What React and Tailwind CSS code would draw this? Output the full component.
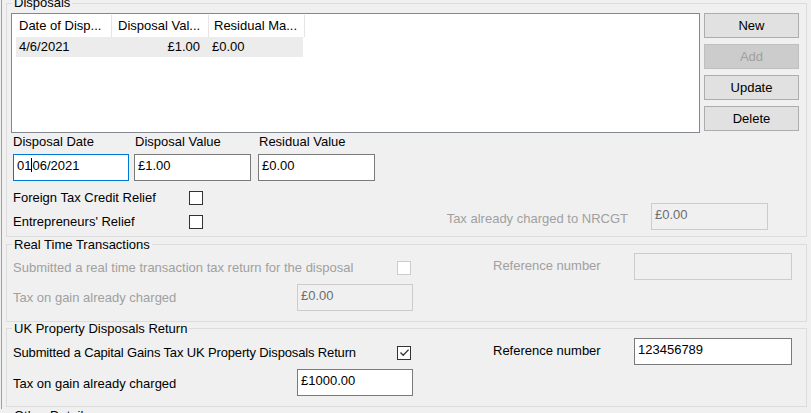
import { useState } from "react";

const Check = ({ checked, disabled }) => (
  <div
    className={`w-[14px] h-[14px] shrink-0 bg-white border flex items-center justify-center ${
      disabled ? "border-[#cccccc]" : "border-[#333333]"
    }`}
  >
    {checked && (
      <svg width="11" height="11" viewBox="0 0 11 11">
        <path d="M1.5 5.5 L4.2 8.3 L9.6 2.6" fill="none" stroke="#333" strokeWidth="1.3" />
      </svg>
    )}
  </div>
);

const Box = ({ children, className = "", disabled, focus }) => (
  <div
    className={`h-[27px] border px-[3px] pt-[3px] leading-[16px] whitespace-nowrap overflow-hidden ${
      disabled
        ? "bg-[#f0f0f0] border-[#cccccc] text-[#6d6d6d]"
        : focus
        ? "bg-white border-[#0078d7]"
        : "bg-white border-[#7a7a7a]"
    } ${className}`}
  >
    {children}
  </div>
);

const Btn = ({ label, disabled }) => (
  <div
    className={`w-[95px] h-[25px] border flex items-center justify-center ${
      disabled ? "bg-[#cccccc] border-[#bfbfbf] text-[#a0a0a0]" : "bg-[#e1e1e1] border-[#adadad]"
    }`}
  >
    {label}
  </div>
);

const Group = ({ title, className = "", children }) => (
  <fieldset className={`border border-[#dcdcdc] ${className}`}>
    <legend className="ml-[5px] px-[2px] leading-[13px]">{title}</legend>
    {children}
  </fieldset>
);

export default function App() {
  const [rows] = useState([{ date: "4/6/2021", value: "£1.00", residual: "£0.00" }]);

  return (
    <div className="w-[811px] h-[413px] overflow-hidden bg-[#f0f0f0] font-['Liberation_Sans',Arial,sans-serif] text-[13px] text-black">
      <div className="ml-[1px] h-full border-l border-[#a0a0a0] pl-[4px] pr-[4px]">
        {/* Disposals */}
        <fieldset className="border border-[#dcdcdc] -mt-[4px] pb-[2px]">
          <legend className="ml-[5px] px-[2px] leading-[14px]">Disposals</legend>
          <div className="flex gap-[4px] pl-[4px] pt-[3px]">
            <div className="w-[689px] h-[120px] bg-white border border-[#828790] pt-[1px] pl-[4px]">
              <div className="flex h-[22px] items-center">
                <div className="w-[96px] pl-[3px] border-r border-[#e5e5e5] h-full flex items-center">Date of Disp...</div>
                <div className="w-[97px] pl-[6px] border-r border-[#e5e5e5] h-full flex items-center">Disposal Val...</div>
                <div className="w-[96px] pl-[5px] border-r border-[#e5e5e5] h-full flex items-center">Residual Ma...</div>
              </div>
              {rows.map((r) => (
                <div key={r.date} className="flex h-[20px] items-center w-[287px] bg-[#ececec]">
                  <div className="w-[96px] pl-[3px]">{r.date}</div>
                  <div className="w-[88px] text-right">{r.value}</div>
                  <div className="pl-[12px]">{r.residual}</div>
                </div>
              ))}
            </div>
            <div className="flex flex-col gap-[6px]">
              <Btn label="New" />
              <Btn label="Add" disabled />
              <Btn label="Update" />
              <Btn label="Delete" />
            </div>
          </div>

          <div className="grid grid-cols-[121px_124px_117px] pl-[6px] mt-[1px]">
            <div>
              <div className="h-[16px] leading-[16px]">Disposal Date</div>
              <Box focus className="mt-[4px] w-[116px]">
                01<span className="inline-block w-[1px] h-[14px] bg-black align-[-2px]"></span>06/2021
              </Box>
            </div>
            <div>
              <div className="h-[16px] leading-[16px] pl-[1px]">Disposal Value</div>
              <Box className="mt-[4px] w-[117px]">£1.00</Box>
            </div>
            <div>
              <div className="h-[16px] leading-[16px] pl-[1px]">Residual Value</div>
              <Box className="mt-[4px] w-[117px]">£0.00</Box>
            </div>
          </div>

          <div className="flex mt-[5px] pl-[6px] pr-[38px]">
            <div className="flex flex-col">
              <div className="h-[24px] flex items-center">
                <div className="w-[176px]">Foreign Tax Credit Relief</div>
                <Check />
              </div>
              <div className="h-[24px] flex items-center">
                <div className="w-[176px]">Entrepreneurs' Relief</div>
                <Check />
              </div>
            </div>
            <div className="ml-auto self-end mb-[4px] flex items-center gap-[23px]">
              <div className="text-[#a0a0a0] pt-[4px]">Tax already charged to NRCGT</div>
              <Box disabled className="w-[117px]">£0.00</Box>
            </div>
          </div>
        </fieldset>

        {/* Real Time Transactions */}
        <Group title="Real Time Transactions" className="mt-[1px] pb-[10px]">
          <div className="flex h-[30px] pl-[6px]">
            <div className="flex items-center self-center mt-[4px] text-[#a0a0a0]">
              <div className="w-[384px]">Submitted a real time transaction tax return for the disposal</div>
              <Check disabled />
            </div>
            <div className="flex items-center ml-[82px] text-[#a0a0a0]">
              <div className="w-[141px]">Reference number</div>
              <Box disabled className="w-[158px]"></Box>
            </div>
          </div>
          <div className="flex items-center pl-[6px] mt-[3px]">
            <div className="w-[284px] text-[#a0a0a0]">Tax on gain already charged</div>
            <Box disabled className="w-[116px]">£0.00</Box>
          </div>
        </Group>

        {/* UK Property Disposals Return */}
        <Group title="UK Property Disposals Return" className="pb-[10px]">
          <div className="flex h-[30px] pl-[6px] pt-[2px]">
            <div className="flex items-center self-center mt-[3px]">
              <div className="w-[384px] tracking-[-0.15px]">Submitted a Capital Gains Tax UK Property Disposals Return</div>
              <Check checked />
            </div>
            <div className="flex items-center ml-[82px]">
              <div className="w-[141px]">Reference number</div>
              <Box className="w-[158px]">123456789</Box>
            </div>
          </div>
          <div className="flex items-center pl-[6px] mt-[4px]">
            <div className="w-[284px] pt-[2px]">Tax on gain already charged</div>
            <Box className="w-[116px]">£1000.00</Box>
          </div>
        </Group>

        <Group title="Other Details" className="mt-[2px] h-[40px]" />
      </div>
    </div>
  );
}
